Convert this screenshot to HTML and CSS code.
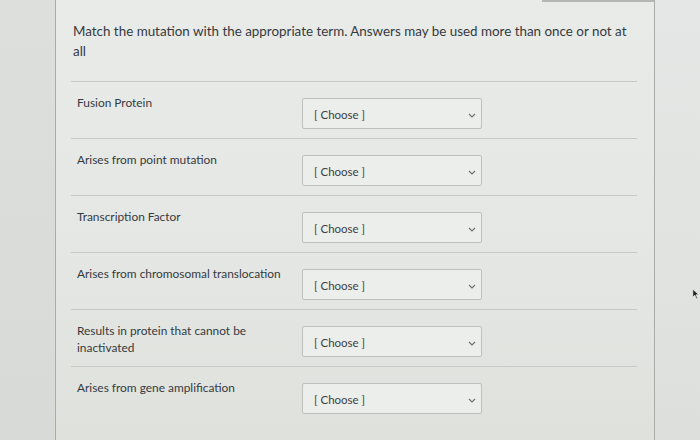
FILE: index.html
```html
<!DOCTYPE html>
<html lang="en">
<head>
<meta charset="utf-8">
<title>Matching question</title>
<link rel="stylesheet" href="styles.css">
</head>
<body>
<div class="screen">
  <div class="gutter"></div>
  <main class="card">
    <div class="card-top"></div>
    <p class="question">Match the mutation with the appropriate term. Answers may be used more than once or not at all</p>
    <div class="rows">
      <div class="row">
        <div class="label">Fusion Protein</div>
        <div class="select"><span>[ Choose ]</span><svg class="chev" viewBox="0 0 8 5" width="8" height="5"><path d="M1 1 L4 4 L7 1" fill="none" stroke="#6a6f72" stroke-width="1.1"/></svg></div>
      </div>
      <div class="row">
        <div class="label">Arises from point mutation</div>
        <div class="select"><span>[ Choose ]</span><svg class="chev" viewBox="0 0 8 5" width="8" height="5"><path d="M1 1 L4 4 L7 1" fill="none" stroke="#6a6f72" stroke-width="1.1"/></svg></div>
      </div>
      <div class="row">
        <div class="label">Transcription Factor</div>
        <div class="select"><span>[ Choose ]</span><svg class="chev" viewBox="0 0 8 5" width="8" height="5"><path d="M1 1 L4 4 L7 1" fill="none" stroke="#6a6f72" stroke-width="1.1"/></svg></div>
      </div>
      <div class="row">
        <div class="label">Arises from chromosomal translocation</div>
        <div class="select"><span>[ Choose ]</span><svg class="chev" viewBox="0 0 8 5" width="8" height="5"><path d="M1 1 L4 4 L7 1" fill="none" stroke="#6a6f72" stroke-width="1.1"/></svg></div>
      </div>
      <div class="row">
        <div class="label">Results in protein that cannot be inactivated</div>
        <div class="select"><span>[ Choose ]</span><svg class="chev" viewBox="0 0 8 5" width="8" height="5"><path d="M1 1 L4 4 L7 1" fill="none" stroke="#6a6f72" stroke-width="1.1"/></svg></div>
      </div>
      <div class="row last">
        <div class="label">Arises from gene amplification</div>
        <div class="select"><span>[ Choose ]</span><svg class="chev" viewBox="0 0 8 5" width="8" height="5"><path d="M1 1 L4 4 L7 1" fill="none" stroke="#6a6f72" stroke-width="1.1"/></svg></div>
      </div>
    </div>
  </main>
  <div class="side"></div>
  <svg class="cursor" viewBox="0 0 10 14" width="8" height="12"><path d="M1 1 L1 11 L3.5 8.5 L5.5 13 L7 12.3 L5 8 L8.5 8 Z" fill="#222" stroke="#f4f4f4" stroke-width="0.8"/></svg>
</div>
</body>
</html>
```

FILE: styles.css
```css
html, body {
  margin: 0;
  padding: 0;
}

body {
  width: 700px;
  height: 440px;
  overflow: hidden;
  background: #d9dcd9;
  font-family: Lato, "Liberation Sans", sans-serif;
  color: #353a3f;
}

.screen {
  position: relative;
  display: flex;
  height: 440px;
}

.gutter {
  width: 55px;
  flex: none;
  background: linear-gradient(180deg, #dcdfdc 0%, #d7dad6 100%);
}

.card {
  position: relative;
  width: 600px;
  flex: none;
  box-sizing: border-box;
  border-left: 1px solid #a9adaa;
  border-right: 1px solid #a9adaa;
  background: linear-gradient(180deg, #e9ebe8 0%, #e5e7e4 55%, #dfe1dd 100%);
  padding: 0 17px 0 15px;
}

.card-top {
  position: absolute;
  top: 0;
  right: 0;
  width: 112px;
  height: 2px;
  background: #b3b6b3;
}

.question {
  margin: 21px 0 20px 2px;
  font-size: 13.4px;
  line-height: 20px;
}

.rows {
  display: flex;
  flex-direction: column;
}

.row {
  display: flex;
  align-items: flex-start;
  border-top: 1px solid #c6c9c5;
  padding: 12px 0 9px 6px;
}

.label {
  width: 225px;
  flex: none;
  font-size: 11.9px;
  line-height: 17px;
  padding-right: 20px;
  box-sizing: border-box;
}

.select {
  margin-top: 4px;
  width: 180px;
  height: 31px;
  box-sizing: border-box;
  border: 1px solid #bdc0bd;
  border-radius: 2px;
  background: #eceeeb;
  display: flex;
  align-items: center;
  justify-content: space-between;
  padding: 0 5px 0 11px;
  font-size: 11.5px;
  color: #3a3f43;
}

.select span {
  padding-top: 2px;
}

.chev {
  display: block;
  margin-top: 3px;
}

.side {
  flex: 1;
  background: linear-gradient(180deg, #e4e7e5 0%, #e0e3e0 60%, #dcdfdb 100%);
}

.cursor {
  position: absolute;
  left: 692px;
  top: 288px;
}
```
